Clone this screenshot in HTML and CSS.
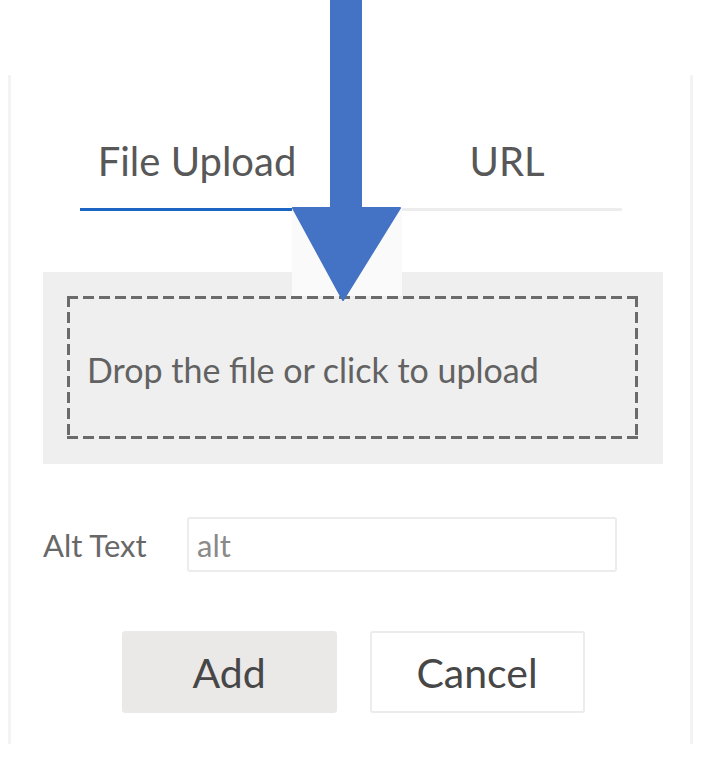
FILE: index.html
```html
<!DOCTYPE html>
<html lang="en">
<head>
    <meta charset="UTF-8">
    <meta name="viewport" content="width=device-width, initial-scale=1.0">
    <title>Insert Image</title>
    <link rel="stylesheet" href="styles.css">
</head>
<body>

    <!-- Image dialog -->
    <div class="panel">

        <!-- Tabs -->
        <div class="tabs">
            <div class="tab active">File Upload</div>
            <div class="tab tab-url">URL</div>
        </div>

        <!-- Drop zone -->
        <div class="drop-area">
            <div class="drop-box">
                <span class="drop-text">Drop the file or click to upload</span>
            </div>
        </div>

        <!-- Alt text -->
        <div class="field-row">
            <label class="field-label" for="alt-input">Alt Text</label>
            <input id="alt-input" class="field-input" type="text" placeholder="alt">
        </div>

        <!-- Actions -->
        <div class="actions">
            <button class="btn btn-add">Add</button>
            <button class="btn btn-cancel">Cancel</button>
        </div>
    </div>

    <!-- Annotation arrow -->
    <svg class="pointer-arrow" width="112" height="302" viewBox="0 0 112 302">
        <rect x="2" y="207" width="110" height="89" fill="#fafafa"/>
        <rect x="40" y="0" width="32" height="210" fill="#4472c4"/>
        <polygon points="3,208 110,208 53,300" fill="#4472c4" stroke="#4472c4" stroke-width="2" stroke-linejoin="round"/>
    </svg>

</body>
</html>
```

FILE: styles.css
```css
body {
    font-family: Lato, "Open Sans", sans-serif;
    margin: 0;
    padding: 0;
    background-color: #fff;
    color: #555;
}

.panel {
    width: 620px;
    margin: 75px 0 0 8px;
    padding: 61px 27px 31px 32px;
    border-left: 3px solid #f3f3f3;
    border-right: 3px solid #f3f3f3;
}

.tabs {
    display: flex;
    width: 542px;
    margin-left: 37px;
    border-bottom: 3px solid #ededed;
}

.tab {
    font-size: 40px;
    line-height: 50px;
    padding-bottom: 22px;
    text-align: center;
    color: #585858;
    margin-bottom: -3px;
    border-bottom: 3px solid transparent;
    cursor: pointer;
}

.tab.active {
    width: 234px;
    border-bottom-color: #1a66c2;
}

.tab-url {
    width: 230px;
    margin-left: auto;
}

.drop-area {
    margin-top: 61px;
    padding: 24px 25px 25px 24px;
    background-color: #efefef;
}

.drop-box {
    height: 143px;
    display: flex;
    align-items: center;
    padding-left: 20px;
    background-image:
        repeating-linear-gradient(90deg, #6b6b6b 0 11px, transparent 11px 16px),
        repeating-linear-gradient(90deg, #6b6b6b 0 11px, transparent 11px 16px),
        repeating-linear-gradient(180deg, #6b6b6b 0 11px, transparent 11px 16px),
        repeating-linear-gradient(180deg, #6b6b6b 0 11px, transparent 11px 16px);
    background-size: 100% 3px, 100% 3px, 3px 100%, 3px 100%;
    background-position: 0 0, 0 100%, 0 0, 100% 0;
    background-repeat: no-repeat;
    cursor: pointer;
}

.drop-text {
    font-size: 34px;
    color: #626262;
    margin-top: 4px;
}

.field-row {
    display: flex;
    align-items: center;
    margin-top: 53px;
}

.field-label {
    width: 144px;
    font-size: 31px;
    color: #686868;
}

.field-input {
    width: 430px;
    height: 55px;
    box-sizing: border-box;
    padding: 0 8px;
    border: 2px solid #ececec;
    border-radius: 3px;
    font-family: inherit;
    font-size: 31px;
    color: #555;
    outline: none;
}

.field-input::placeholder {
    color: #8a8a8a;
}

.actions {
    display: flex;
    justify-content: center;
    gap: 33px;
    margin-top: 59px;
}

.btn {
    width: 215px;
    height: 82px;
    font-family: inherit;
    font-size: 41px;
    color: #474747;
    border-radius: 3px;
    cursor: pointer;
}

.btn-add {
    background-color: #eae9e8;
    border: 1px solid #eae9e8;
}

.btn-cancel {
    background-color: #fff;
    border: 2px solid #ececec;
}

.pointer-arrow {
    position: absolute;
    left: 290px;
    top: 0;
}
```
